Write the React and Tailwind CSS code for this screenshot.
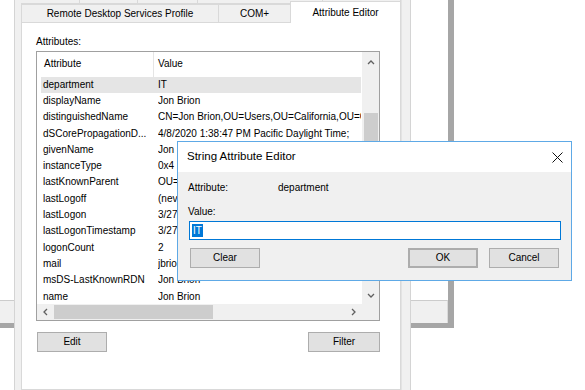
import React from 'react';

const rows = [
  ['department', 'IT'],
  ['displayName', 'Jon Brion'],
  ['distinguishedName', 'CN=Jon Brion,OU=Users,OU=California,OU=Corp,DC=contoso,DC=com'],
  ['dSCorePropagationD...', '4/8/2020 1:38:47 PM Pacific Daylight Time;'],
  ['givenName', 'Jon'],
  ['instanceType', '0x4'],
  ['lastKnownParent', 'OU=Users,OU=California,OU=Corp,DC=contoso'],
  ['lastLogoff', '(never)'],
  ['lastLogon', '3/27/2020 9:14:02 AM Pacific Daylight Time'],
  ['lastLogonTimestamp', '3/27/2020 9:13:58 AM Pacific Daylight Time'],
  ['logonCount', '2'],
  ['mail', 'jbrion@contoso.com'],
  ['msDS-LastKnownRDN', 'Jon Brion'],
  ['name', 'Jon Brion'],
];

const Chevron = ({ dir }) => {
  const pts = {
    up: '1,5 4,2 7,5',
    down: '1,2 4,5 7,2',
    left: '5,1 2,4 5,7',
    right: '2,1 5,4 2,7',
  }[dir];
  return (
    <svg width="8" height="8" viewBox="0 0 8 8">
      <polyline points={pts} fill="none" stroke="#606060" strokeWidth="1.3" />
    </svg>
  );
};

const WinButton = ({ children, className = '' }) => (
  <div className={`h-[20px] w-[70px] flex items-center justify-center bg-[#e1e1e1] border border-[#adadad] ${className}`}>
    {children}
  </div>
);

const App = () => {
  return (
    <div className="relative w-[585px] h-[390px] overflow-hidden bg-white text-[10px] text-black font-['Liberation_Sans',Arial,sans-serif] leading-none">
      {/* window behind */}
      <div className="absolute left-0 top-0 w-[454px] h-[328px] border-r-[6px] border-b-[5px] border-[#a6a6a6] flex flex-col justify-end">
        <div className="h-[23px] bg-[#f0f0f0] border-t border-r border-t-[#cccccc] border-r-[#dadada]"></div>
      </div>

      {/* properties dialog */}
      <div className="absolute left-[14px] top-0 w-[397px] h-[390px] flex bg-[#f0f0f0]">
        <div className="w-[7px] border-l border-[#d4d4d4]"></div>
        <div className="w-[380px] flex flex-col">
          <div className="flex h-[4px]">
            <div className="w-[59px] border-r border-b border-[#d9d9d9]"></div>
            <div className="w-[58px] border-r border-b border-[#d9d9d9]"></div>
            <div className="w-[60px] border-r border-b border-[#d9d9d9]"></div>
            <div className="w-[125px] border-r border-b border-[#d9d9d9]"></div>
            <div className="w-[78px] border-r border-b border-[#d9d9d9]"></div>
          </div>
          <div className="flex h-[18px]">
            <div className="w-[197px] border-l border-t border-[#d9d9d9] flex items-center justify-center pt-px">
              Remote Desktop Services Profile
            </div>
            <div className="w-[72px] border-l border-t border-[#d9d9d9] flex items-center justify-center pt-px">
              COM+
            </div>
            <div className="relative z-10 -mt-[3px] h-[22px] w-[111px] bg-white border-l border-r border-t border-[#d9d9d9] flex justify-center pt-[6px]">
              Attribute Editor
            </div>
          </div>
          <div className="flex-1 bg-white border border-[#d9d9d9] pl-[14px] pt-[13px]">
            <div className="h-[12px] flex items-center">Attributes:</div>
            <div className="mt-[3px] w-[344px] h-[270px] border border-[#a0a0a0] flex flex-col">
              <div className="flex-1 flex min-h-0">
                <div className="flex-1 overflow-hidden">
                  <div className="h-[24.5px] flex items-center">
                    <div className="w-[116px] pl-[7px]">Attribute</div>
                    <div className="w-px h-full bg-[#e5e5e5]"></div>
                    <div className="pl-[4px]">Value</div>
                  </div>
                  {rows.map(([attr, val], i) => (
                    <div
                      key={attr}
                      className={`ml-[4px] w-[320px] h-[16.3px] flex items-center whitespace-nowrap ${i === 0 ? 'bg-[#e5e5e5]' : ''}`}
                    >
                      <div className="w-[117px] pl-[2px] overflow-hidden">{attr}</div>
                      <div className="flex-1 overflow-hidden">{val}</div>
                    </div>
                  ))}
                </div>
                <div className="w-[17px] bg-[#f0f0f0] flex flex-col items-center">
                  <div className="h-[20px] flex items-center justify-center pt-[2px]">
                    <Chevron dir="up" />
                  </div>
                  <div className="mt-[41px] w-[14px] h-[90px] bg-[#cdcdcd]"></div>
                  <div className="flex-1"></div>
                  <div className="h-[17px] flex items-center justify-center">
                    <Chevron dir="down" />
                  </div>
                </div>
              </div>
              <div className="h-[16px] flex bg-[#f0f0f0]">
                <div className="w-[17px] flex items-center justify-center">
                  <Chevron dir="left" />
                </div>
                <div className="w-[159px] my-px bg-[#cdcdcd]"></div>
                <div className="flex-1"></div>
                <div className="w-[17px] flex items-center justify-center">
                  <Chevron dir="right" />
                </div>
                <div className="w-[17px]"></div>
              </div>
            </div>
            <div className="mt-[11px] w-[344px] pl-px flex justify-between">
              <WinButton>Edit</WinButton>
              <WinButton className="w-[72px]">Filter</WinButton>
            </div>
          </div>
        </div>
        <div className="w-[10px] border-l border-r border-l-[#e3e3e3] border-r-[#d4d4d4]"></div>
      </div>

      {/* String Attribute Editor */}
      <div className="absolute left-[177px] top-[141px] w-[395px] h-[140px] border border-[#5ea9e6] flex flex-col bg-[#f0f0f0] z-20">
        <div className="h-[30px] bg-white flex items-center justify-between pl-[9px] pr-[8px]">
          <span className="text-[11.5px]">String Attribute Editor</span>
          <svg width="11" height="11" viewBox="0 0 11 11">
            <path d="M0.5 0.5 L10.5 10.5 M10.5 0.5 L0.5 10.5" stroke="#111" strokeWidth="1" />
          </svg>
        </div>
        <div className="flex-1 pl-[10px] pr-[12px] pt-[10px]">
          <div className="h-[12px] flex items-center">
            <div className="w-[90px]">Attribute:</div>
            <div>department</div>
          </div>
          <div className="mt-[12px] h-[12px] flex items-center">Value:</div>
          <div className="mt-[3px] ml-px w-[372px] h-[19px] bg-white border border-[#0078d7] flex items-center pl-[2px]">
            <span className="bg-[#0078d7] text-white h-[13px] px-px flex items-center">IT</span>
          </div>
          <div className="mt-[8px] flex items-center">
            <WinButton className="ml-[2px]">Clear</WinButton>
            <div className="flex-1"></div>
            <WinButton className="border-2 border-[#0078d7]">OK</WinButton>
            <WinButton className="ml-[11px]">Cancel</WinButton>
          </div>
        </div>
      </div>
    </div>
  );
};

export default App;
